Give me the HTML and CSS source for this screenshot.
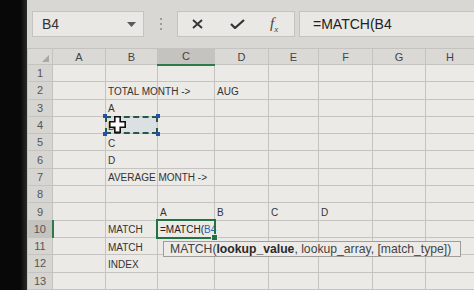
FILE: index.html
```html
<!DOCTYPE html>
<html lang="en">
<head>
    <meta charset="UTF-8">
    <meta name="viewport" content="width=device-width, initial-scale=1.0">
    <title>MATCH</title>
    <link rel="stylesheet" href="styles.css">
</head>
<body>
    <div class="screen">
        <div class="bezel"></div>
        <div class="excel">
            <div class="formula-bar">
                <div class="name-box">
                    <span>B4</span>
                    <svg width="9" height="5" viewBox="0 0 9 5"><path d="M0 0h9L4.5 5z" fill="#5a5a5a"/></svg>
                </div>
                <div class="grip"><i></i><i></i><i></i></div>
                <div class="fx-buttons">
                    <svg class="btn-x" width="11" height="10" viewBox="0 0 11 10"><path d="M1 1L10 9M10 1L1 9" stroke="#333" stroke-width="1.8" fill="none"/></svg>
                    <svg class="btn-ok" width="15" height="10" viewBox="0 0 15 10"><path d="M1 5L5 9L14 1" stroke="#333" stroke-width="2.2" fill="none"/></svg>
                    <span class="fx">f<sub>x</sub></span>
                </div>
                <div class="formula-input">=MATCH(B4</div>
            </div>

            <table class="sheet">
                <colgroup>
                    <col class="w-hdr"><col class="w-a"><col class="w-b"><col class="w-c"><col class="w-d">
                    <col class="w-e"><col class="w-f"><col class="w-g"><col class="w-h">
                </colgroup>
                <tr class="col-head">
                    <th class="corner"><svg width="7" height="7" viewBox="0 0 7 7"><path d="M7 0V7H0z" fill="#a9a8a4"/></svg></th>
                    <th>A</th><th>B</th><th class="on">C</th><th>D</th><th>E</th><th>F</th><th>G</th><th>H</th>
                </tr>
                <tr><th class="row-head">1</th><td></td><td></td><td></td><td></td><td></td><td></td><td></td><td></td></tr>
                <tr><th class="row-head">2</th><td></td><td>TOTAL MONTH -&gt;</td><td></td><td>AUG</td><td></td><td></td><td></td><td></td></tr>
                <tr><th class="row-head">3</th><td></td><td>A</td><td></td><td></td><td></td><td></td><td></td><td></td></tr>
                <tr>
                    <th class="row-head">4</th><td></td>
                    <td class="copy">B
                        <span class="handle tl"></span><span class="handle tr"></span>
                        <span class="handle bl"></span><span class="handle br"></span>
                        <svg class="cursor" width="17" height="17" viewBox="0 0 17 17"><path d="M5.8 0.8h5.4v5h5v5.4h-5v5h-5.4v-5h-5v-5.4h5z" fill="#fff" stroke="#111" stroke-width="1.6"/></svg>
                    </td>
                    <td></td><td></td><td></td><td></td><td></td><td></td>
                </tr>
                <tr><th class="row-head">5</th><td></td><td>C</td><td></td><td></td><td></td><td></td><td></td><td></td></tr>
                <tr><th class="row-head">6</th><td></td><td>D</td><td></td><td></td><td></td><td></td><td></td><td></td></tr>
                <tr><th class="row-head">7</th><td></td><td>AVERAGE MONTH -&gt;</td><td></td><td></td><td></td><td></td><td></td><td></td></tr>
                <tr><th class="row-head">8</th><td></td><td></td><td></td><td></td><td></td><td></td><td></td><td></td></tr>
                <tr><th class="row-head">9</th><td></td><td></td><td>A</td><td>B</td><td>C</td><td>D</td><td></td><td></td></tr>
                <tr>
                    <th class="row-head on">10</th><td></td><td>MATCH</td>
                    <td class="active">=MATCH(<span class="ref">B4</span><span class="fill"></span></td>
                    <td></td><td></td><td></td><td></td><td></td>
                </tr>
                <tr>
                    <th class="row-head">11</th><td></td><td>MATCH</td>
                    <td class="tip-cell">
                        <div class="tooltip">MATCH(<b>lookup_value</b>, lookup_array, [match_type])</div>
                    </td>
                    <td></td><td></td><td></td><td></td><td></td>
                </tr>
                <tr><th class="row-head">12</th><td></td><td>INDEX</td><td></td><td></td><td></td><td></td><td></td><td></td></tr>
                <tr><th class="row-head">13</th><td></td><td></td><td></td><td></td><td></td><td></td><td></td><td></td></tr>
            </table>
        </div>
    </div>
</body>
</html>
```

FILE: styles.css
```css
body {
    margin: 0;
    background-color: #000;
    font-family: "Liberation Sans", Arial, sans-serif;
}
.screen {
    display: flex;
    width: 474px;
    height: 290px;
    overflow: hidden;
}
.bezel {
    width: 27px;
    flex-shrink: 0;
    background: linear-gradient(to right, #080808 75%, #2b2b2a);
}
.excel {
    flex: 1;
    min-width: 0;
    display: flex;
    flex-direction: column;
    background-color: #ebeae6;
}

/* formula bar */
.formula-bar {
    height: 48px;
    flex-shrink: 0;
    display: flex;
    align-items: center;
    background-color: #d8d7d3;
}
.name-box, .fx-buttons, .formula-input {
    height: 26px;
    box-sizing: border-box;
    background-color: #e9e8e5;
    border: 1px solid #c4c3bf;
    display: flex;
    align-items: center;
}
.name-box {
    margin-left: 5px;
    width: 112px;
    justify-content: space-between;
    padding: 0 7px 0 9px;
    font-size: 14px;
    color: #333;
}
.grip {
    margin: 0 15px 0 16px;
    display: flex;
    flex-direction: column;
    gap: 3px;
}
.grip i {
    width: 2px;
    height: 2px;
    background-color: #9c9b97;
}
.fx-buttons {
    width: 118px;
    padding-left: 14px;
}
.btn-ok {
    margin-left: 27px;
}
.fx {
    margin-left: 25px;
    font-family: "Liberation Serif", serif;
    font-style: italic;
    font-size: 15px;
    color: #444;
}
.fx sub {
    font-size: 9px;
}
.formula-input {
    flex: 1;
    margin-left: 4px;
    border-right: none;
    padding-left: 13px;
    font-size: 14px;
    color: #222;
}

/* grid */
.sheet {
    border-collapse: collapse;
    table-layout: fixed;
    width: 447px;
    font-size: 10px;
    color: #333;
}
.w-hdr { width: 25px; }
.w-a { width: 53px; }
.w-b { width: 52px; }
.w-c { width: 57px; }
.w-d { width: 54px; }
.w-e { width: 50px; }
.w-f { width: 54px; }
.w-g { width: 53px; }
.w-h { width: 49px; }
.sheet tr {
    height: 17.3px;
}
.sheet th, .sheet td {
    border: 1px solid #c4c3bf;
    padding: 0;
    white-space: nowrap;
}
.sheet td {
    padding: 2px 0 0 2px;
}
.sheet tr.col-head {
    height: 16px;
}
.col-head th {
    background-color: #dad9d5;
    font-weight: normal;
    font-size: 11px;
    color: #444;
}
.col-head th.on {
    background-color: #c4c3bf;
    border-bottom: 2px solid #2b7a4b;
}
.corner {
    text-align: right;
    vertical-align: bottom;
    line-height: 0;
}
.corner svg {
    margin: 0 3px 2px 0;
}
.row-head {
    background-color: #d6d5d1;
    font-weight: normal;
    font-size: 11px;
    color: #555;
    text-align: center;
}
.row-head.on {
    background-color: #c4c3bf;
    border-right: 2px solid #2b7a4b;
}

/* copied cell B4 */
.copy {
    position: relative;
    background-color: #dbe0e2;
}
.copy::after {
    content: "";
    position: absolute;
    inset: -1px;
    border: 2px dashed #24584a;
}
.handle {
    position: absolute;
    width: 4px;
    height: 4px;
    background-color: #2450a8;
    z-index: 1;
}
.handle.tl { left: -3px; top: -3px; }
.handle.tr { right: -3px; top: -3px; }
.handle.bl { left: -3px; bottom: -3px; }
.handle.br { right: -3px; bottom: -3px; }
.cursor {
    position: absolute;
    left: 3px;
    top: -1px;
    z-index: 2;
}

/* active cell C10 */
.active {
    position: relative;
    color: #222;
}
.active::after {
    content: "";
    position: absolute;
    inset: -2px;
    border: 2px solid #217346;
}
.ref {
    color: #2f62b5;
}
.fill {
    position: absolute;
    right: -4px;
    bottom: -4px;
    width: 5px;
    height: 5px;
    background-color: #217346;
    border: 1px solid #ebeae6;
    z-index: 1;
}

/* function tooltip */
.tip-cell {
    position: relative;
}
.tooltip {
    position: absolute;
    left: 5px;
    top: 3px;
    z-index: 3;
    width: 298px;
    height: 16px;
    box-sizing: border-box;
    padding-left: 6px;
    background-color: #ecebe8;
    border: 1px solid #9e9d99;
    font-size: 12.2px;
    line-height: 14px;
    color: #444;
}
.tooltip b {
    color: #2a2a2a;
}
```
